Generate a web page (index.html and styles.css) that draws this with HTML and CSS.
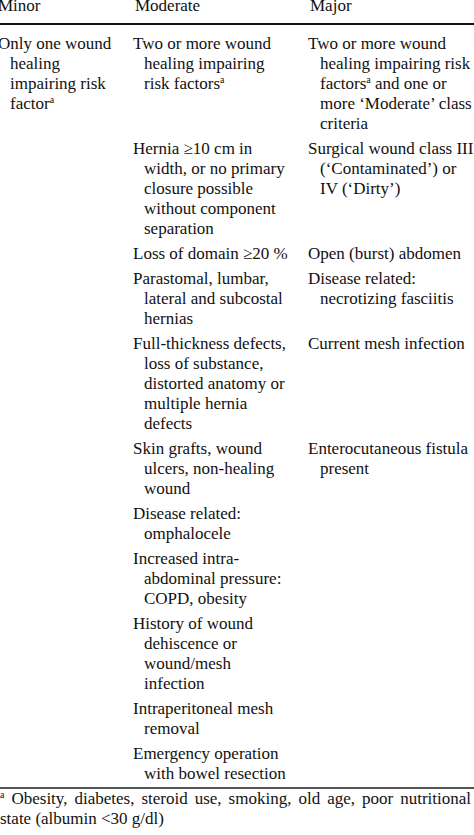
FILE: index.html
```html
<!DOCTYPE html>
<html lang="en">
<head>
<meta charset="utf-8">
<title>Wound classification</title>
<link rel="stylesheet" href="styles.css">
</head>
<body>
<div class="table">
  <div class="row head">
    <div class="cell">Minor</div>
    <div class="cell">Moderate</div>
    <div class="cell">Major</div>
  </div>
  <div class="body">
    <div class="row">
      <div class="cell">Only one wound<br>healing<br>impairing risk<br>factor<span class="sup">a</span></div>
      <div class="cell ind11">Two or more wound<br>healing impairing<br>risk factors<span class="sup">a</span></div>
      <div class="cell">Two or more wound<br>healing impairing risk<br>factors<span class="sup">a</span> and one or<br>more ‘Moderate’ class<br>criteria</div>
    </div>
    <div class="row">
      <div class="cell"></div>
      <div class="cell ind11">Hernia ≥10 cm in<br>width, or no primary<br>closure possible<br>without component<br>separation</div>
      <div class="cell">Surgical wound class III<br>(‘Contaminated’) or<br>IV (‘Dirty’)</div>
    </div>
    <div class="row">
      <div class="cell"></div>
      <div class="cell ind11">Loss of domain ≥20 %</div>
      <div class="cell">Open (burst) abdomen</div>
    </div>
    <div class="row">
      <div class="cell"></div>
      <div class="cell ind11">Parastomal, lumbar,<br>lateral and subcostal<br>hernias</div>
      <div class="cell">Disease related:<br>necrotizing fasciitis</div>
    </div>
    <div class="row">
      <div class="cell"></div>
      <div class="cell ind11">Full-thickness defects,<br>loss of substance,<br>distorted anatomy or<br>multiple hernia<br>defects</div>
      <div class="cell">Current mesh infection</div>
    </div>
    <div class="row">
      <div class="cell"></div>
      <div class="cell ind11">Skin grafts, wound<br>ulcers, non-healing<br>wound</div>
      <div class="cell">Enterocutaneous fistula<br>present</div>
    </div>
    <div class="row">
      <div class="cell"></div>
      <div class="cell ind11">Disease related:<br>omphalocele</div>
      <div class="cell"></div>
    </div>
    <div class="row">
      <div class="cell"></div>
      <div class="cell ind11">Increased intra-<br>abdominal pressure:<br>COPD, obesity</div>
      <div class="cell"></div>
    </div>
    <div class="row">
      <div class="cell"></div>
      <div class="cell ind11">History of wound<br>dehiscence or<br>wound/mesh<br>infection</div>
      <div class="cell"></div>
    </div>
    <div class="row">
      <div class="cell"></div>
      <div class="cell ind11">Intraperitoneal mesh<br>removal</div>
      <div class="cell"></div>
    </div>
    <div class="row">
      <div class="cell"></div>
      <div class="cell ind11">Emergency operation<br>with bowel resection</div>
      <div class="cell"></div>
    </div>
  </div>
</div>
<div class="foot">
  <div class="foot-line"><span class="sup">a</span> Obesity, diabetes, steroid use, smoking, old age, poor nutritional</div>
  <div class="foot-last">state (albumin &lt;30 g/dl)</div>
</div>
</body>
</html>
```
FILE: styles.css
```css
html, body {
  margin: 0;
  padding: 0;
  background: #ffffff;
  overflow: hidden;
}

body {
  font-family: "Liberation Serif", "Times New Roman", serif;
  font-size: 17px;
  line-height: 20px;
  color: #111111;
}

.table {
  margin-left: -2px;
}

.row {
  display: grid;
  grid-template-columns: 135px 175px 1fr;
}

.head {
  line-height: 12px;
  padding-bottom: 11px;
  border-bottom: 2px solid #111111;
  margin-left: 2px;
}

.head .cell {
  padding: 0;
  text-indent: 0;
}

.head .cell:first-child {
  margin-left: -2px;
}

.body {
  padding-top: 6px;
  padding-bottom: 1px;
}

.cell {
  white-space: nowrap;
  padding: 3px 0 2px 12px;
  text-indent: -12px;
}

.cell.ind11 {
  padding-left: 11px;
  text-indent: -11px;
}

.sup {
  font-size: 10px;
  line-height: 0;
  vertical-align: 6px;
}

.foot {
  border-top: 2px solid #555555;
}

.foot-line {
  text-align: justify;
  text-align-last: justify;
  padding-right: 3px;
}

.foot-last {
  text-align: left;
}
```
